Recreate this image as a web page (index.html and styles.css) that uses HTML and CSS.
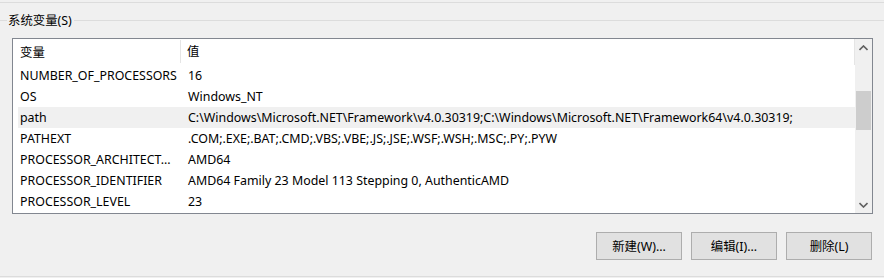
FILE: index.html
```html
<!DOCTYPE html>
<html>
<head>
<meta charset="utf-8">
<link rel="stylesheet" href="styles.css">
</head>
<body>
<div class="topline"></div>
<div class="group">
  <div class="group-title">
    <span class="gline-l"></span>
    <span class="gtext">系统变量(S)</span>
    <span class="gline-r"></span>
  </div>
  <div class="listbox">
    <div class="listmain">
      <div class="lhead">
        <div class="hcell c1">变量</div>
        <div class="hcell c2">值</div>
      </div>
      <div class="row"><div class="c1">NUMBER_OF_PROCESSORS</div><div class="c2">16</div></div>
      <div class="row"><div class="c1">OS</div><div class="c2">Windows_NT</div></div>
      <div class="row sel"><div class="c1">path</div><div class="c2">C:\Windows\Microsoft.NET\Framework\v4.0.30319;C:\Windows\Microsoft.NET\Framework64\v4.0.30319;</div></div>
      <div class="row"><div class="c1">PATHEXT</div><div class="c2">.COM;.EXE;.BAT;.CMD;.VBS;.VBE;.JS;.JSE;.WSF;.WSH;.MSC;.PY;.PYW</div></div>
      <div class="row"><div class="c1">PROCESSOR_ARCHITECT...</div><div class="c2">AMD64</div></div>
      <div class="row"><div class="c1">PROCESSOR_IDENTIFIER</div><div class="c2">AMD64 Family 23 Model 113 Stepping 0, AuthenticAMD</div></div>
      <div class="row"><div class="c1">PROCESSOR_LEVEL</div><div class="c2">23</div></div>
    </div>
    <div class="vscroll">
      <div class="arrow">
        <svg width="9" height="6" viewBox="0 0 9 6"><path d="M0.5 5 L4.5 1 L8.5 5" fill="none" stroke="#606060" stroke-width="1.6"/></svg>
      </div>
      <div class="track"><div class="thumb"></div></div>
      <div class="arrow">
        <svg width="9" height="6" viewBox="0 0 9 6"><path d="M0.5 1 L4.5 5 L8.5 1" fill="none" stroke="#606060" stroke-width="1.6"/></svg>
      </div>
    </div>
  </div>
  <div class="buttons">
    <button class="btn">新建(W)...</button>
    <button class="btn">编辑(I)...</button>
    <button class="btn">删除(L)</button>
  </div>
</div>
<div class="bottomline"></div>
</body>
</html>
```
FILE: styles.css
```css
html, body {
  margin: 0;
  padding: 0;
  background: #f0f0f0;
  width: 884px;
  height: 278px;
  overflow: hidden;
  font-family: "Noto Sans", "Noto Sans CJK SC", sans-serif;
  font-size: 12.4px;
  color: #000;
}
.topline {
  margin-top: 2px;
  height: 1px;
  background: #dcdcdc;
}
.group {
  padding-top: 8px;
}
.group-title {
  display: flex;
  align-items: center;
  height: 19px;
}
.gline-l {
  width: 7px;
  height: 1px;
  background: #dcdcdc;
}
.gtext {
  padding: 0 2px 0 1px;
  line-height: 19px;
}
.gline-r {
  flex: 1;
  height: 1px;
  background: #dcdcdc;
}
.listbox {
  margin-top: 8px;
  margin-left: 12px;
  width: 859px;
  height: 174px;
  border: 1px solid #828790;
  background: #fff;
  display: flex;
}
.listmain {
  flex: 1;
}
.lhead {
  display: grid;
  grid-template-columns: 168px 1fr;
  height: 26px;
  border-right: 1px solid #e5e5e5;
  box-sizing: border-box;
}
.hcell {
  line-height: 26px;
  white-space: nowrap;
}
.lhead .c1 {
  padding-left: 7px;
  border-right: 1px solid #e5e5e5;
  height: 23px;
  margin-top: 1px;
  line-height: 25px;
}
.lhead .c2 {
  padding-left: 6px;
}
.row {
  display: grid;
  grid-template-columns: 163px 1fr;
  height: 21px;
  line-height: 21px;
  margin-left: 5px;
  white-space: nowrap;
}
.row .c1 {
  padding-left: 2px;
  overflow: hidden;
}
.row .c2 {
  padding-left: 7px;
  overflow: hidden;
}
.row.sel {
  background: #f0f0f0;
}
.vscroll {
  width: 17px;
  background: #f0f0f0;
  display: flex;
  flex-direction: column;
}
.arrow {
  height: 17px;
  display: flex;
  align-items: center;
  justify-content: center;
}
.track {
  flex: 1;
  padding-top: 35px;
}
.thumb {
  margin-left: 1px;
  width: 15px;
  height: 39px;
  background: #cdcdcd;
}
.buttons {
  display: flex;
  justify-content: flex-end;
  gap: 9px;
  margin-top: 18px;
  padding-right: 12px;
}
.btn {
  width: 86px;
  height: 28px;
  background: #e1e1e1;
  border: 1px solid #adadad;
  font-family: "Noto Sans", "Noto Sans CJK SC", sans-serif;
  font-size: 12.4px;
  color: #000;
  padding: 0;
  margin: 0;
}
.bottomline {
  margin-top: 16px;
  height: 1px;
  background: #dcdcdc;
}
```
